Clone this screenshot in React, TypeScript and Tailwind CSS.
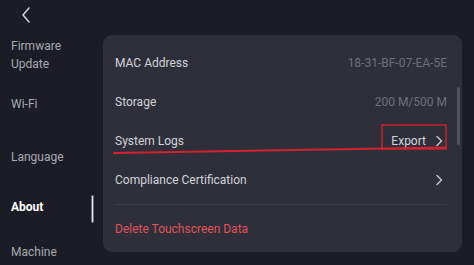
export default function App() {
  const chevron = (
    <svg width="8" height="12" viewBox="0 0 8 12" fill="none" className="ml-[9px] mr-[4px]">
      <path d="M2 1.5 L6.5 6 L2 10.5" stroke="#c9cad1" strokeWidth="1.4" strokeLinecap="round" strokeLinejoin="round" />
    </svg>
  );

  return (
    <main
      className="relative w-[474px] h-[265px] overflow-hidden bg-[#1b1c25] flex text-[12px]"
      style={{ fontFamily: "Roboto, 'Liberation Sans', sans-serif" }}
    >
      {/* sidebar */}
      <nav className="w-[103px] shrink-0 flex flex-col pl-[11px] pr-[9px] text-[#a9aab2]">
        <div className="h-[30px] flex items-center pl-[9px]">
          <svg width="12" height="18" viewBox="0 0 12 18" fill="none">
            <path d="M9 2 L3 9 L9 16" stroke="#d4d5dc" strokeWidth="1.5" strokeLinecap="round" strokeLinejoin="round" />
          </svg>
        </div>
        <div className="mt-[7px] leading-[18px]">
          Firmware
          <br />
          Update
        </div>
        <div className="mt-[22px] leading-[18px]">Wi-Fi</div>
        <div className="mt-[35px] leading-[18px]">Language</div>
        <div className="mt-[29px] h-[24px] flex items-center justify-between">
          <span className="font-bold text-white">About</span>
          <span className="w-[3px] h-[28px] mt-[4px] rounded-full bg-[#e4e5ea] border border-[#6c6d76]" />
        </div>
        <div className="mt-[24px] leading-[18px]">Machine</div>
      </nav>

      {/* panel */}
      <section className="relative mt-[35px] w-[359px] h-[217px] rounded-[9px] bg-[#2e2f3a] pt-[9px] pl-[12px] pr-[15px]">
        <div className="h-[38px] flex items-center justify-between">
          <span className="text-[#d2d3da]">MAC Address</span>
          <span className="text-[#6f707a]">18-31-BF-07-EA-5E</span>
        </div>
        <div className="h-[39px] flex items-center justify-between">
          <span className="text-[#d2d3da]">Storage</span>
          <span className="text-[#6f707a]">200 M/500 M</span>
        </div>
        <div className="h-[39px] flex items-center justify-between">
          <span className="text-[#d2d3da]">System Logs</span>
          <span className="flex items-center text-[#d2d3da]">
            Export
            {chevron}
          </span>
        </div>
        <div className="pb-[4px] border-b border-[#3b3c47]">
          <div className="h-[40px] flex items-center justify-between">
            <span className="text-[#d2d3da]">Compliance Certification</span>
            {chevron}
          </div>
        </div>
        <div className="h-[47px] flex items-center">
          <span className="text-[#e0525a]">Delete Touchscreen Data</span>
        </div>
        <span className="absolute right-[2px] top-[52px] w-[3px] h-[58px] rounded-full bg-[#50515b]" />
      </section>

      {/* annotation */}
      <svg className="absolute inset-0 pointer-events-none" width="474" height="265" viewBox="0 0 474 265" fill="none">
        <rect x="382" y="125" width="64" height="24" stroke="#d3222c" strokeWidth="1.4" />
        <path d="M114 153 L446 147.5" stroke="#d3222c" strokeWidth="2" strokeLinecap="round" />
      </svg>
    </main>
  );
}
